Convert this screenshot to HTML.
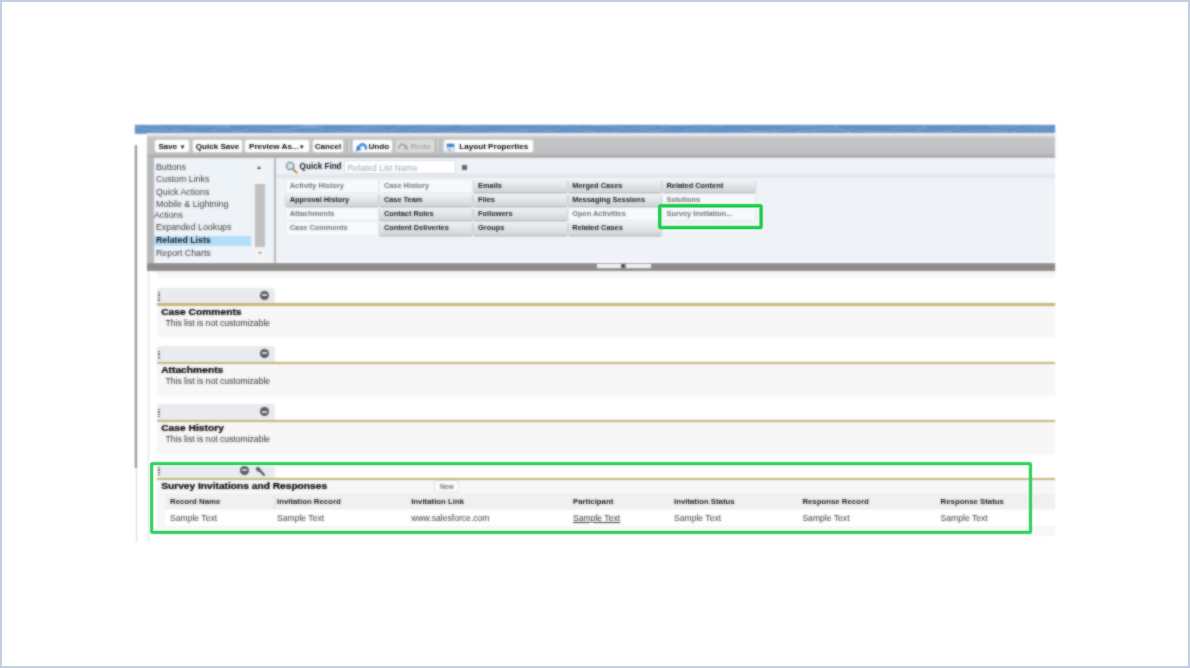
<!DOCTYPE html>
<html>
<head>
<meta charset="utf-8">
<title>Layout editor</title>
<style>
html,body{margin:0;padding:0;}
body{width:1190px;height:668px;overflow:hidden;background:#fff;font-family:"Liberation Sans",sans-serif;position:relative;}
.a{position:absolute;}
#frame{left:0;top:0;width:1186px;height:664px;border:2px solid #c3cfe0;}
.shot{left:135px;top:125px;width:920px;height:417px;overflow:hidden;background:#fff;}
/* coordinates inside #shot are target minus (135,125) */
.t{position:absolute;white-space:nowrap;line-height:1;color:#333;}
.b{font-weight:bold;}
.blue{left:0;top:0;width:920px;height:8.8px;background:linear-gradient(#5f8dc5,#6793c8 70%,#7ba2d0);overflow:hidden;}
.tool{left:12px;top:8.2px;width:908px;height:24.6px;background:linear-gradient(#eeeeee,#e4e4e5 10%,#cbcbcd 17%,#c5c5c7 24%,#c0c0c2 84%,#adadae 91%,#a8a8a9);}
.btn{position:absolute;top:14.6px;height:12.2px;background:#fff;border-radius:2px;box-shadow:0 0 0 1px #d0d0d0;font-size:8.1px;font-weight:bold;color:#000;line-height:13.6px;overflow:hidden;text-align:center;white-space:nowrap;}
.pal{left:12px;top:32px;width:908px;height:107px;background:#b9b9b9;}
.side{left:19px;top:33px;width:120px;height:104.6px;background:#eef3f8;}
.main{left:141px;top:33px;width:779px;height:105px;background:#eff3f8;}
.palbot{left:12px;top:137.6px;width:908px;height:8.2px;background:linear-gradient(#a09e9e,#8c8a8a 25%,#8e8c8c 80%,#989696);}
.si{position:absolute;left:21px;font-size:8.8px;color:#3c3c3c;white-space:nowrap;line-height:1;}
.cell{position:absolute;width:92.3px;height:12.6px;font-size:7.4px;font-weight:bold;line-height:12.4px;text-indent:3.8px;white-space:nowrap;border-radius:1px;}
.cell.on{background:linear-gradient(#f0f1f2,#e4e6e8 45%,#d2d5d9);box-shadow:0 0.8px 0 0.6px #bcc0c5;color:#151515;}
.cell.off{background:#f7f9fb;color:#70737a;box-shadow:0 0 0 0.6px #e1e6eb;}
.tab{position:absolute;left:22px;width:118px;height:14px;background:#eaebee;border-radius:3px 3px 0 0;}
.gold{position:absolute;left:22px;width:898px;height:2.3px;margin-top:-0.2px;background:#c3b77a;}
.body{position:absolute;left:22px;width:898px;background:#f7f7f7;}
.h{position:absolute;left:26.2px;transform:scaleY(0.94);font-size:10.25px;font-weight:bold;color:#000;-webkit-text-stroke:0.25px #000;white-space:nowrap;line-height:1;}
.sub{position:absolute;left:30.5px;font-size:8.6px;color:#2e2e2e;white-space:nowrap;line-height:1;}
.circ{position:absolute;width:9px;height:9px;border-radius:50%;background:#55585d;}
.circ:after{content:"";position:absolute;left:2.2px;top:3.6px;width:4.6px;height:1.8px;background:#d9dadc;}
.grip{position:absolute;left:23.4px;width:2px;height:8.5px;background:repeating-linear-gradient(#6a6a6a 0 1.4px,transparent 1.4px 2.4px);}
.th{position:absolute;top:373px;font-size:7.8px;font-weight:bold;color:#151515;white-space:nowrap;line-height:1;}
.td{position:absolute;top:388.8px;font-size:8.6px;color:#3d3d3d;white-space:nowrap;line-height:1;}
.green{position:absolute;border:2.3px solid #25cc54;box-sizing:border-box;filter:blur(0.45px);border-radius:1.5px;}
</style>
</head>
<body>
<div class="a" id="frame"></div>
<div class="a shot" style="filter:blur(0.8px);">
  <div class="a blue"><svg class="a" style="left:0;top:0;" width="920" height="9" viewBox="0 0 920 9" fill="none" stroke="#a9c6e6" stroke-opacity="0.3" stroke-width="1.1"><path d="M0 2.4 Q12 3.7 25 5.8" /><path d="M12 0.2 Q22 0.6 32 4.4" /><path d="M23 4.2 Q35 8.5 48 2.9" /><path d="M36 1.7 Q49 9.3 62 7.4" /><path d="M54 2.2 Q75 0.6 97 1.3" /><path d="M75 6.8 Q85 2.2 95 2.7" /><path d="M92 2.0 Q103 11.1 115 2.2" /><path d="M119 2.4 Q141 5.2 163 7.3" /><path d="M138 6.1 Q160 2.8 183 1.6" /><path d="M157 3.6 Q172 0.2 188 1.9" /><path d="M168 0.4 Q178 0.5 188 5.0" /><path d="M195 3.8 Q214 12.0 233 2.7" /><path d="M211 3.3 Q221 6.1 231 1.6" /><path d="M229 2.8 Q240 1.1 252 6.0" /><path d="M256 7.2 Q268 -3.0 280 0.8" /><path d="M273 6.1 Q286 -0.2 299 4.9" /><path d="M293 2.3 Q304 1.7 316 0.2" /><path d="M305 7.7 Q328 6.8 351 2.3" /><path d="M325 2.6 Q334 -1.6 343 2.6" /><path d="M355 6.9 Q370 6.9 386 7.0" /><path d="M367 4.9 Q380 0.7 394 7.2" /><path d="M385 4.8 Q400 5.2 415 1.3" /><path d="M406 3.6 Q415 8.9 425 2.9" /><path d="M425 0.8 Q443 2.8 461 7.9" /><path d="M441 0.5 Q451 -1.3 462 0.4" /><path d="M455 0.3 Q473 -0.0 492 3.9" /><path d="M466 6.7 Q476 12.0 487 2.3" /><path d="M496 3.8 Q508 2.6 520 1.9" /><path d="M507 3.4 Q519 10.2 532 2.0" /><path d="M523 1.5 Q539 0.1 556 0.3" /><path d="M549 6.2 Q561 0.2 573 3.3" /><path d="M569 7.1 Q578 -2.1 588 2.5" /><path d="M597 7.7 Q612 9.9 627 5.2" /><path d="M608 3.1 Q624 10.9 641 3.4" /><path d="M636 7.6 Q659 0.7 682 1.3" /><path d="M661 7.2 Q682 2.7 704 2.5" /><path d="M677 6.4 Q696 1.4 715 6.4" /><path d="M699 0.6 Q715 11.4 732 7.8" /><path d="M715 3.2 Q724 8.3 734 5.0" /><path d="M733 6.9 Q752 7.0 772 7.0" /><path d="M757 3.8 Q775 2.2 793 3.2" /><path d="M767 7.4 Q779 10.0 791 0.1" /><path d="M780 6.5 Q795 10.0 810 6.3" /><path d="M807 7.0 Q816 6.7 826 1.6" /><path d="M827 7.1 Q849 3.5 871 6.2" /><path d="M853 0.2 Q869 5.5 885 0.3" /><path d="M878 6.9 Q895 -1.8 913 4.9" /><path d="M899 6.1 Q909 -3.8 919 4.2" /></svg></div>
  <!-- left edge lines -->
  <div class="a" style="left:0.4px;top:20px;width:2px;height:323px;background:#939393;"></div>
  <div class="a" style="left:0.5px;top:343px;width:1.6px;height:74px;background:#d6d6d6;"></div>
  <div class="a" style="left:12.5px;top:146px;width:1.2px;height:271px;background:#e1e1e1;"></div>

  <div class="a tool"></div>
  <div class="btn" style="left:20px;width:34px;">Save <span style="font-size:6px;">▼</span></div>
  <div class="btn" style="left:58px;width:49px;">Quick Save</div>
  <div class="btn" style="left:109.7px;width:64.3px;">Preview As...<span style="font-size:6px;">▼</span></div>
  <div class="btn" style="left:178px;width:30px;">Cancel</div>
  <div class="a" style="left:211.8px;top:14px;width:1.8px;height:13.6px;background:#d3d5d8;border-left:1.2px solid #b1b1b3;border-right:1.2px solid #b1b1b3;"></div>
  <div class="btn" style="left:217.5px;width:39px;text-indent:13.5px;">Undo</div>
  <div class="btn" style="left:261px;width:38px;text-indent:11px;color:#a9a9a9;background:#dcdcdc;box-shadow:0 0 0 1px #c9c9c9;">Redo</div>
  <div class="a" style="left:301.4px;top:14px;width:1.8px;height:13.6px;background:#d3d5d8;border-left:1.2px solid #b1b1b3;border-right:1.2px solid #b1b1b3;"></div>
  <div class="btn" style="left:308.5px;width:89px;text-indent:11.5px;">Layout Properties</div>
  <!-- undo icon -->
  <svg class="a" style="left:219.5px;top:15.5px;" width="12" height="12" viewBox="0 0 12 12"><path d="M11 7.6 C10.8 3.6 7.4 2 4.8 4.8 L4 5.8" fill="none" stroke="#3c86d8" stroke-width="2.5" stroke-linecap="round"/><path d="M0.8 10.4 L2 4.4 L6.8 8.6 Z" fill="#3c86d8"/></svg>
  <!-- redo icon -->
  <svg class="a" style="left:262.5px;top:16px;" width="11" height="11" viewBox="0 0 11 11"><path d="M1 7 C1.2 3.4 4.4 2 6.8 4.4 L7.4 5.2" fill="none" stroke="#a4a4a4" stroke-width="1.9" stroke-linecap="round"/><path d="M10 9.2 L9.2 4 L5.2 7.6 Z" fill="#a4a4a4"/></svg>
  <!-- layout props icon -->
  <div class="a" style="left:312.3px;top:19.3px;width:6.8px;height:7.2px;background:#dfe9f5;box-shadow:0 0 0 0.5px #8aa9cf;"></div>
  <div class="a" style="left:312.3px;top:19.3px;width:6.8px;height:3.2px;background:#3b7fd0;"></div>
  <div class="a" style="left:313.6px;top:23.2px;width:1.8px;height:3.3px;background:#7b8aa0;"></div>
  <div class="a pal"></div>
  <div class="a side"></div>
  <div class="a main"></div>
  <div class="a" style="left:19px;top:136.2px;width:901px;height:1.5px;background:#f9fafb;"></div>
  <div class="a" style="left:139px;top:33px;width:2px;height:105px;background:#b9b9b9;"></div>
  <div class="a palbot"></div>
  <div class="a" style="left:461.8px;top:138.8px;width:54px;height:4.6px;background:#f1f1f1;border-radius:1px;box-shadow:0 0 0 0.6px #a8a8a8;"></div>
  <div class="a" style="left:485.6px;top:138.6px;width:5.4px;height:5px;background:#8e8c8c;"></div><div class="a" style="left:485.9px;top:139.4px;width:0;height:0;border-left:2.4px solid transparent;border-right:2.4px solid transparent;border-bottom:3.6px solid #2b2b2b;"></div>

  <!-- sidebar -->
  <div class="a" style="left:19px;top:110.5px;width:97px;height:10px;background:#b3e0f8;"></div>
  <div class="si" style="top:37.9px;">Buttons</div>
  <div class="si" style="top:50.4px;">Custom Links</div>
  <div class="si" style="top:62.8px;">Quick Actions</div>
  <div class="si" style="top:75.4px;">Mobile &amp; Lightning</div>
  <div class="si" style="top:85.8px;left:19px;">Actions</div>
  <div class="si" style="top:98.3px;">Expanded Lookups</div>
  <div class="si b" style="top:110.9px;color:#111;">Related Lists</div>
  <div class="si" style="top:123.6px;">Report Charts</div>
  <!-- scrollbar -->
  <div class="a" style="left:119.2px;top:34px;width:11px;height:102px;background:#f2f4f6;"></div>
  <div class="a" style="left:119.8px;top:59px;width:9.8px;height:63px;background:#c1c1c1;"></div>
  <div class="a" style="left:122.2px;top:41px;width:0;height:0;border-left:2.5px solid transparent;border-right:2.5px solid transparent;border-bottom:3px solid #444;"></div>
  <div class="a" style="left:122.7px;top:127px;width:0;height:0;border-left:2px solid transparent;border-right:2px solid transparent;border-top:2.5px solid #888;"></div>

  <!-- quick find -->
  <svg class="a" style="left:149.5px;top:35.5px;" width="13" height="13" viewBox="0 0 13 13"><circle cx="5.2" cy="5" r="3.6" fill="#d4e8f7" stroke="#6f7f90" stroke-width="1.3"/><path d="M7.8 7.8 L11.6 11.6" stroke="#b08c3a" stroke-width="2" stroke-linecap="round"/></svg>
  <div class="t b" style="left:164.6px;top:37.8px;font-size:8.15px;color:#111;">Quick Find</div>
  <div class="a" style="left:210px;top:36.3px;width:110px;height:12.2px;background:#fff;box-shadow:0 0 0 0.6px #c9ced4;"></div>
  <div class="t" style="left:212.5px;top:38.9px;font-size:8.5px;color:#a4a8ae;">Related List Name</div>
  <div class="a" style="left:327px;top:40px;width:5px;height:5px;background:#666;"></div>
  <div class="a" style="left:141px;top:49.4px;width:779px;height:3.6px;background:linear-gradient(#eaeef4,#dfe5ee 60%,#e6ebf2);"></div>

  <!-- grid -->
  <!--GRID-->
  <div class="cell off" style="left:150.9px;top:54.6px;">Activity History</div>
  <div class="cell on" style="left:150.9px;top:68.75px;">Approval History</div>
  <div class="cell off" style="left:150.9px;top:82.9px;">Attachments</div>
  <div class="cell off" style="left:150.9px;top:97.05px;">Case Comments</div>
  <div class="cell off" style="left:245.1px;top:54.6px;">Case History</div>
  <div class="cell on" style="left:245.1px;top:68.75px;">Case Team</div>
  <div class="cell on" style="left:245.1px;top:82.9px;">Contact Roles</div>
  <div class="cell on" style="left:245.1px;top:97.05px;">Content Deliveries</div>
  <div class="cell on" style="left:339.3px;top:54.6px;">Emails</div>
  <div class="cell on" style="left:339.3px;top:68.75px;">Files</div>
  <div class="cell on" style="left:339.3px;top:82.9px;">Followers</div>
  <div class="cell on" style="left:339.3px;top:97.05px;">Groups</div>
  <div class="cell on" style="left:433.5px;top:54.6px;">Merged Cases</div>
  <div class="cell on" style="left:433.5px;top:68.75px;">Messaging Sessions</div>
  <div class="cell off" style="left:433.5px;top:82.9px;">Open Activities</div>
  <div class="cell on" style="left:433.5px;top:97.05px;">Related Cases</div>
  <div class="cell on" style="left:527.7px;top:54.6px;">Related Content</div>
  <div class="cell off" style="left:527.7px;top:68.75px;">Solutions</div>
  <div class="cell off" style="left:527.7px;top:82.9px;">Survey Invitation...</div>
  <!--/GRID-->
  <!--LOWER-->
  <div class="body" style="top:145.8px;height:7.4px;background:linear-gradient(#f2f2f2,#fbfbfb);"></div>
  <div class="tab" style="top:162.7px;height:16px;"></div>
  <div class="grip" style="top:167.2px;"></div>
  <div class="circ" style="left:125px;top:165.6px;"></div>
  <div class="body" style="top:180.2px;height:32.3px;"></div>
  <div class="gold" style="top:178.4px;"></div>
  <div class="h" style="top:181.6px;">Case Comments</div>
  <div class="sub" style="top:193.5px;">This list is not customizable</div>
  <div class="tab" style="top:221px;height:16px;"></div>
  <div class="grip" style="top:225.5px;"></div>
  <div class="circ" style="left:125px;top:223.9px;"></div>
  <div class="body" style="top:238.5px;height:32.3px;"></div>
  <div class="gold" style="top:236.7px;"></div>
  <div class="h" style="top:239.9px;">Attachments</div>
  <div class="sub" style="top:251.8px;">This list is not customizable</div>
  <div class="tab" style="top:279.3px;height:16px;"></div>
  <div class="grip" style="top:283.8px;"></div>
  <div class="circ" style="left:125px;top:282.2px;"></div>
  <div class="body" style="top:296.8px;height:32.3px;"></div>
  <div class="gold" style="top:295px;"></div>
  <div class="h" style="top:298.2px;">Case History</div>
  <div class="sub" style="top:310.1px;">This list is not customizable</div>
  <div class="tab" style="top:341px;height:12px;"></div>
  <div class="grip" style="top:341.5px;"></div>
  <div class="circ" style="left:105px;top:340.7px;"></div>
  <svg class="a" style="left:120px;top:340.9px;" width="11" height="11" viewBox="0 0 11 11"><path d="M3.6 3.4L9 8.8" stroke="#555" stroke-width="2.2" stroke-linecap="round"/><path d="M0.9 3.1a2.5 2.5 0 0 1 3.2-2.4L2.9 2l.5 1.3 1.3.4 1.2-1.2a2.5 2.5 0 0 1-3.3 3Z" fill="#5c5c5c"/><circle cx="3.2" cy="3.1" r="1.9" fill="#5c5c5c" fill-opacity="0.75"/></svg>
  <div class="body" style="top:354.5px;height:56px;"></div>
  <div class="gold" style="top:352.7px;"></div>
  <div class="h" style="top:355.5px;font-size:10.2px;">Survey Invitations and Responses</div>
  <div class="a" style="left:300.4px;top:355.6px;width:23px;height:11.2px;background:#fbfbfb;box-shadow:0 0 0 0.7px #dcdcdc;border-radius:2px;font-size:6.8px;font-weight:bold;color:#7a7a7a;text-align:center;line-height:11.6px;">New</div>
  <div class="a" style="left:30.2px;top:368.8px;width:890px;height:15.7px;background:#f0f0f0;"></div>
  <div class="a" style="left:30.2px;top:384.5px;width:890px;height:16px;background:#fff;"></div>
  <div class="a" style="left:139px;top:368.5px;width:1px;height:16px;background:#e0e0e0;"></div>
  <div class="th" style="left:35px;">Record Name</div>
  <div class="td" style="left:35px;">Sample Text</div>
  <div class="th" style="left:142px;">Invitation Record</div>
  <div class="td" style="left:142px;">Sample Text</div>
  <div class="th" style="left:276.2px;">Invitation Link</div>
  <div class="td" style="left:276.2px;">www.salesforce.com</div>
  <div class="th" style="left:438px;">Participant</div>
  <div class="td" style="left:438px; text-decoration:underline;color:#333;">Sample Text</div>
  <div class="th" style="left:539px;">Invitation Status</div>
  <div class="td" style="left:539px;">Sample Text</div>
  <div class="th" style="left:667.4px;">Response Record</div>
  <div class="td" style="left:667.4px;">Sample Text</div>
  <div class="th" style="left:805.6px;">Response Status</div>
  <div class="td" style="left:805.6px;">Sample Text</div>
  <!--/LOWER-->
</div>
<div class="a shot" style="opacity:0.3;">
  <div class="a blue"><svg class="a" style="left:0;top:0;" width="920" height="9" viewBox="0 0 920 9" fill="none" stroke="#a9c6e6" stroke-opacity="0.3" stroke-width="1.1"><path d="M0 2.4 Q12 3.7 25 5.8" /><path d="M12 0.2 Q22 0.6 32 4.4" /><path d="M23 4.2 Q35 8.5 48 2.9" /><path d="M36 1.7 Q49 9.3 62 7.4" /><path d="M54 2.2 Q75 0.6 97 1.3" /><path d="M75 6.8 Q85 2.2 95 2.7" /><path d="M92 2.0 Q103 11.1 115 2.2" /><path d="M119 2.4 Q141 5.2 163 7.3" /><path d="M138 6.1 Q160 2.8 183 1.6" /><path d="M157 3.6 Q172 0.2 188 1.9" /><path d="M168 0.4 Q178 0.5 188 5.0" /><path d="M195 3.8 Q214 12.0 233 2.7" /><path d="M211 3.3 Q221 6.1 231 1.6" /><path d="M229 2.8 Q240 1.1 252 6.0" /><path d="M256 7.2 Q268 -3.0 280 0.8" /><path d="M273 6.1 Q286 -0.2 299 4.9" /><path d="M293 2.3 Q304 1.7 316 0.2" /><path d="M305 7.7 Q328 6.8 351 2.3" /><path d="M325 2.6 Q334 -1.6 343 2.6" /><path d="M355 6.9 Q370 6.9 386 7.0" /><path d="M367 4.9 Q380 0.7 394 7.2" /><path d="M385 4.8 Q400 5.2 415 1.3" /><path d="M406 3.6 Q415 8.9 425 2.9" /><path d="M425 0.8 Q443 2.8 461 7.9" /><path d="M441 0.5 Q451 -1.3 462 0.4" /><path d="M455 0.3 Q473 -0.0 492 3.9" /><path d="M466 6.7 Q476 12.0 487 2.3" /><path d="M496 3.8 Q508 2.6 520 1.9" /><path d="M507 3.4 Q519 10.2 532 2.0" /><path d="M523 1.5 Q539 0.1 556 0.3" /><path d="M549 6.2 Q561 0.2 573 3.3" /><path d="M569 7.1 Q578 -2.1 588 2.5" /><path d="M597 7.7 Q612 9.9 627 5.2" /><path d="M608 3.1 Q624 10.9 641 3.4" /><path d="M636 7.6 Q659 0.7 682 1.3" /><path d="M661 7.2 Q682 2.7 704 2.5" /><path d="M677 6.4 Q696 1.4 715 6.4" /><path d="M699 0.6 Q715 11.4 732 7.8" /><path d="M715 3.2 Q724 8.3 734 5.0" /><path d="M733 6.9 Q752 7.0 772 7.0" /><path d="M757 3.8 Q775 2.2 793 3.2" /><path d="M767 7.4 Q779 10.0 791 0.1" /><path d="M780 6.5 Q795 10.0 810 6.3" /><path d="M807 7.0 Q816 6.7 826 1.6" /><path d="M827 7.1 Q849 3.5 871 6.2" /><path d="M853 0.2 Q869 5.5 885 0.3" /><path d="M878 6.9 Q895 -1.8 913 4.9" /><path d="M899 6.1 Q909 -3.8 919 4.2" /></svg></div>
  <!-- left edge lines -->
  <div class="a" style="left:0.4px;top:20px;width:2px;height:323px;background:#939393;"></div>
  <div class="a" style="left:0.5px;top:343px;width:1.6px;height:74px;background:#d6d6d6;"></div>
  <div class="a" style="left:12.5px;top:146px;width:1.2px;height:271px;background:#e1e1e1;"></div>

  <div class="a tool"></div>
  <div class="btn" style="left:20px;width:34px;">Save <span style="font-size:6px;">▼</span></div>
  <div class="btn" style="left:58px;width:49px;">Quick Save</div>
  <div class="btn" style="left:109.7px;width:64.3px;">Preview As...<span style="font-size:6px;">▼</span></div>
  <div class="btn" style="left:178px;width:30px;">Cancel</div>
  <div class="a" style="left:211.8px;top:14px;width:1.8px;height:13.6px;background:#d3d5d8;border-left:1.2px solid #b1b1b3;border-right:1.2px solid #b1b1b3;"></div>
  <div class="btn" style="left:217.5px;width:39px;text-indent:13.5px;">Undo</div>
  <div class="btn" style="left:261px;width:38px;text-indent:11px;color:#a9a9a9;background:#dcdcdc;box-shadow:0 0 0 1px #c9c9c9;">Redo</div>
  <div class="a" style="left:301.4px;top:14px;width:1.8px;height:13.6px;background:#d3d5d8;border-left:1.2px solid #b1b1b3;border-right:1.2px solid #b1b1b3;"></div>
  <div class="btn" style="left:308.5px;width:89px;text-indent:11.5px;">Layout Properties</div>
  <!-- undo icon -->
  <svg class="a" style="left:219.5px;top:15.5px;" width="12" height="12" viewBox="0 0 12 12"><path d="M11 7.6 C10.8 3.6 7.4 2 4.8 4.8 L4 5.8" fill="none" stroke="#3c86d8" stroke-width="2.5" stroke-linecap="round"/><path d="M0.8 10.4 L2 4.4 L6.8 8.6 Z" fill="#3c86d8"/></svg>
  <!-- redo icon -->
  <svg class="a" style="left:262.5px;top:16px;" width="11" height="11" viewBox="0 0 11 11"><path d="M1 7 C1.2 3.4 4.4 2 6.8 4.4 L7.4 5.2" fill="none" stroke="#a4a4a4" stroke-width="1.9" stroke-linecap="round"/><path d="M10 9.2 L9.2 4 L5.2 7.6 Z" fill="#a4a4a4"/></svg>
  <!-- layout props icon -->
  <div class="a" style="left:312.3px;top:19.3px;width:6.8px;height:7.2px;background:#dfe9f5;box-shadow:0 0 0 0.5px #8aa9cf;"></div>
  <div class="a" style="left:312.3px;top:19.3px;width:6.8px;height:3.2px;background:#3b7fd0;"></div>
  <div class="a" style="left:313.6px;top:23.2px;width:1.8px;height:3.3px;background:#7b8aa0;"></div>
  <div class="a pal"></div>
  <div class="a side"></div>
  <div class="a main"></div>
  <div class="a" style="left:19px;top:136.2px;width:901px;height:1.5px;background:#f9fafb;"></div>
  <div class="a" style="left:139px;top:33px;width:2px;height:105px;background:#b9b9b9;"></div>
  <div class="a palbot"></div>
  <div class="a" style="left:461.8px;top:138.8px;width:54px;height:4.6px;background:#f1f1f1;border-radius:1px;box-shadow:0 0 0 0.6px #a8a8a8;"></div>
  <div class="a" style="left:485.6px;top:138.6px;width:5.4px;height:5px;background:#8e8c8c;"></div><div class="a" style="left:485.9px;top:139.4px;width:0;height:0;border-left:2.4px solid transparent;border-right:2.4px solid transparent;border-bottom:3.6px solid #2b2b2b;"></div>

  <!-- sidebar -->
  <div class="a" style="left:19px;top:110.5px;width:97px;height:10px;background:#b3e0f8;"></div>
  <div class="si" style="top:37.9px;">Buttons</div>
  <div class="si" style="top:50.4px;">Custom Links</div>
  <div class="si" style="top:62.8px;">Quick Actions</div>
  <div class="si" style="top:75.4px;">Mobile &amp; Lightning</div>
  <div class="si" style="top:85.8px;left:19px;">Actions</div>
  <div class="si" style="top:98.3px;">Expanded Lookups</div>
  <div class="si b" style="top:110.9px;color:#111;">Related Lists</div>
  <div class="si" style="top:123.6px;">Report Charts</div>
  <!-- scrollbar -->
  <div class="a" style="left:119.2px;top:34px;width:11px;height:102px;background:#f2f4f6;"></div>
  <div class="a" style="left:119.8px;top:59px;width:9.8px;height:63px;background:#c1c1c1;"></div>
  <div class="a" style="left:122.2px;top:41px;width:0;height:0;border-left:2.5px solid transparent;border-right:2.5px solid transparent;border-bottom:3px solid #444;"></div>
  <div class="a" style="left:122.7px;top:127px;width:0;height:0;border-left:2px solid transparent;border-right:2px solid transparent;border-top:2.5px solid #888;"></div>

  <!-- quick find -->
  <svg class="a" style="left:149.5px;top:35.5px;" width="13" height="13" viewBox="0 0 13 13"><circle cx="5.2" cy="5" r="3.6" fill="#d4e8f7" stroke="#6f7f90" stroke-width="1.3"/><path d="M7.8 7.8 L11.6 11.6" stroke="#b08c3a" stroke-width="2" stroke-linecap="round"/></svg>
  <div class="t b" style="left:164.6px;top:37.8px;font-size:8.15px;color:#111;">Quick Find</div>
  <div class="a" style="left:210px;top:36.3px;width:110px;height:12.2px;background:#fff;box-shadow:0 0 0 0.6px #c9ced4;"></div>
  <div class="t" style="left:212.5px;top:38.9px;font-size:8.5px;color:#a4a8ae;">Related List Name</div>
  <div class="a" style="left:327px;top:40px;width:5px;height:5px;background:#666;"></div>
  <div class="a" style="left:141px;top:49.4px;width:779px;height:3.6px;background:linear-gradient(#eaeef4,#dfe5ee 60%,#e6ebf2);"></div>

  <!-- grid -->
  <!--GRID-->
  <div class="cell off" style="left:150.9px;top:54.6px;">Activity History</div>
  <div class="cell on" style="left:150.9px;top:68.75px;">Approval History</div>
  <div class="cell off" style="left:150.9px;top:82.9px;">Attachments</div>
  <div class="cell off" style="left:150.9px;top:97.05px;">Case Comments</div>
  <div class="cell off" style="left:245.1px;top:54.6px;">Case History</div>
  <div class="cell on" style="left:245.1px;top:68.75px;">Case Team</div>
  <div class="cell on" style="left:245.1px;top:82.9px;">Contact Roles</div>
  <div class="cell on" style="left:245.1px;top:97.05px;">Content Deliveries</div>
  <div class="cell on" style="left:339.3px;top:54.6px;">Emails</div>
  <div class="cell on" style="left:339.3px;top:68.75px;">Files</div>
  <div class="cell on" style="left:339.3px;top:82.9px;">Followers</div>
  <div class="cell on" style="left:339.3px;top:97.05px;">Groups</div>
  <div class="cell on" style="left:433.5px;top:54.6px;">Merged Cases</div>
  <div class="cell on" style="left:433.5px;top:68.75px;">Messaging Sessions</div>
  <div class="cell off" style="left:433.5px;top:82.9px;">Open Activities</div>
  <div class="cell on" style="left:433.5px;top:97.05px;">Related Cases</div>
  <div class="cell on" style="left:527.7px;top:54.6px;">Related Content</div>
  <div class="cell off" style="left:527.7px;top:68.75px;">Solutions</div>
  <div class="cell off" style="left:527.7px;top:82.9px;">Survey Invitation...</div>
  <!--/GRID-->
  <!--LOWER-->
  <div class="body" style="top:145.8px;height:7.4px;background:linear-gradient(#f2f2f2,#fbfbfb);"></div>
  <div class="tab" style="top:162.7px;height:16px;"></div>
  <div class="grip" style="top:167.2px;"></div>
  <div class="circ" style="left:125px;top:165.6px;"></div>
  <div class="body" style="top:180.2px;height:32.3px;"></div>
  <div class="gold" style="top:178.4px;"></div>
  <div class="h" style="top:181.6px;">Case Comments</div>
  <div class="sub" style="top:193.5px;">This list is not customizable</div>
  <div class="tab" style="top:221px;height:16px;"></div>
  <div class="grip" style="top:225.5px;"></div>
  <div class="circ" style="left:125px;top:223.9px;"></div>
  <div class="body" style="top:238.5px;height:32.3px;"></div>
  <div class="gold" style="top:236.7px;"></div>
  <div class="h" style="top:239.9px;">Attachments</div>
  <div class="sub" style="top:251.8px;">This list is not customizable</div>
  <div class="tab" style="top:279.3px;height:16px;"></div>
  <div class="grip" style="top:283.8px;"></div>
  <div class="circ" style="left:125px;top:282.2px;"></div>
  <div class="body" style="top:296.8px;height:32.3px;"></div>
  <div class="gold" style="top:295px;"></div>
  <div class="h" style="top:298.2px;">Case History</div>
  <div class="sub" style="top:310.1px;">This list is not customizable</div>
  <div class="tab" style="top:341px;height:12px;"></div>
  <div class="grip" style="top:341.5px;"></div>
  <div class="circ" style="left:105px;top:340.7px;"></div>
  <svg class="a" style="left:120px;top:340.9px;" width="11" height="11" viewBox="0 0 11 11"><path d="M3.6 3.4L9 8.8" stroke="#555" stroke-width="2.2" stroke-linecap="round"/><path d="M0.9 3.1a2.5 2.5 0 0 1 3.2-2.4L2.9 2l.5 1.3 1.3.4 1.2-1.2a2.5 2.5 0 0 1-3.3 3Z" fill="#5c5c5c"/><circle cx="3.2" cy="3.1" r="1.9" fill="#5c5c5c" fill-opacity="0.75"/></svg>
  <div class="body" style="top:354.5px;height:56px;"></div>
  <div class="gold" style="top:352.7px;"></div>
  <div class="h" style="top:355.5px;font-size:10.2px;">Survey Invitations and Responses</div>
  <div class="a" style="left:300.4px;top:355.6px;width:23px;height:11.2px;background:#fbfbfb;box-shadow:0 0 0 0.7px #dcdcdc;border-radius:2px;font-size:6.8px;font-weight:bold;color:#7a7a7a;text-align:center;line-height:11.6px;">New</div>
  <div class="a" style="left:30.2px;top:368.8px;width:890px;height:15.7px;background:#f0f0f0;"></div>
  <div class="a" style="left:30.2px;top:384.5px;width:890px;height:16px;background:#fff;"></div>
  <div class="a" style="left:139px;top:368.5px;width:1px;height:16px;background:#e0e0e0;"></div>
  <div class="th" style="left:35px;">Record Name</div>
  <div class="td" style="left:35px;">Sample Text</div>
  <div class="th" style="left:142px;">Invitation Record</div>
  <div class="td" style="left:142px;">Sample Text</div>
  <div class="th" style="left:276.2px;">Invitation Link</div>
  <div class="td" style="left:276.2px;">www.salesforce.com</div>
  <div class="th" style="left:438px;">Participant</div>
  <div class="td" style="left:438px; text-decoration:underline;color:#333;">Sample Text</div>
  <div class="th" style="left:539px;">Invitation Status</div>
  <div class="td" style="left:539px;">Sample Text</div>
  <div class="th" style="left:667.4px;">Response Record</div>
  <div class="td" style="left:667.4px;">Sample Text</div>
  <div class="th" style="left:805.6px;">Response Status</div>
  <div class="td" style="left:805.6px;">Sample Text</div>
  <!--/LOWER-->
</div>
<!--GREEN-->
<svg class="a" style="left:654.6px;top:200.8px;" width="110.8" height="31.3" viewBox="0 0 110.8 31.3" fill="none"><rect x="4.7" y="4.7" width="101.4" height="21.9" rx="1.2" stroke="#1fcd48" stroke-opacity="0.33" stroke-width="4.5"/><rect x="4.7" y="4.7" width="101.4" height="21.9" rx="0.9" stroke="#1fcd48" stroke-width="2.9"/></svg>
<svg class="a" style="left:147.3px;top:459px;" width="888.1" height="78" viewBox="0 0 888.1 78" fill="none"><rect x="4.6" y="4.6" width="878.9" height="68.8" rx="1.2" stroke="#30d35e" stroke-opacity="0.33" stroke-width="4.3"/><rect x="4.6" y="4.6" width="878.9" height="68.8" rx="0.9" stroke="#30d35e" stroke-width="2.7"/></svg>
<!--/GREEN-->
</body>
</html>
